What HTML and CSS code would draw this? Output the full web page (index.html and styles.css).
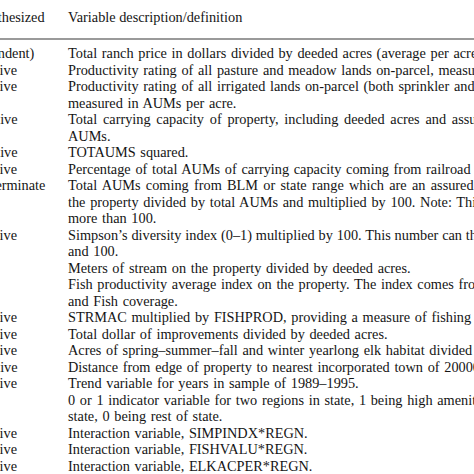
FILE: index.html
```html
<!DOCTYPE html>
<html lang="en">
<head>
<meta charset="utf-8">
<title>Table 1</title>
<link rel="stylesheet" href="styles.css">
</head>
<body>
<table class="vars">
  <thead>
    <tr><th class="sign">Hypothesized</th><th class="desc">Variable description/definition</th></tr>
  </thead>
  <tbody>
    <tr><td class="sign">(dependent)</td><td class="desc">Total ranch price in dollars divided by deeded acres (average per acre)</td></tr>
    <tr><td class="sign pos">Positive</td><td class="desc">Productivity rating of all pasture and meadow lands on-parcel, measured</td></tr>
    <tr><td class="sign pos">Positive</td><td class="desc">Productivity rating of all irrigated lands on-parcel (both sprinkler and<br>measured in AUMs per acre.</td></tr>
    <tr><td class="sign">Negative</td><td class="desc"><span class="wide">Total carrying capacity of property, including deeded acres and assured</span><br>AUMs.</td></tr>
    <tr><td class="sign">Negative</td><td class="desc">TOTAUMS squared.</td></tr>
    <tr><td class="sign pos">Positive</td><td class="desc">Percentage of total AUMs of carrying capacity coming from railroad</td></tr>
    <tr><td class="sign">Indeterminate</td><td class="desc"><span class="loose">Total AUMs coming from BLM or state range which are an assured</span><br>the property divided by total AUMs and multiplied by 100. Note: This<br>more than 100.</td></tr>
    <tr><td class="sign pos">Positive</td><td class="desc"><span class="tight">Simpson’s diversity index (0–1) multiplied by 100. This number can then</span><br>and 100.</td></tr>
    <tr><td class="sign"></td><td class="desc">Meters of stream on the property divided by deeded acres.</td></tr>
    <tr><td class="sign"></td><td class="desc">Fish productivity average index on the property. The index comes from<br>and Fish coverage.</td></tr>
    <tr><td class="sign pos">Positive</td><td class="desc">STRMAC multiplied by FISHPROD, providing a measure of fishing</td></tr>
    <tr><td class="sign pos">Positive</td><td class="desc">Total dollar of improvements divided by deeded acres.</td></tr>
    <tr><td class="sign pos">Positive</td><td class="desc">Acres of spring–summer–fall and winter yearlong elk habitat divided</td></tr>
    <tr><td class="sign">Negative</td><td class="desc">Distance from edge of property to nearest incorporated town of 20000</td></tr>
    <tr><td class="sign pos">Positive</td><td class="desc">Trend variable for years in sample of 1989–1995.</td></tr>
    <tr><td class="sign"></td><td class="desc">0 or 1 indicator variable for two regions in state, 1 being high amenity<br>state, 0 being rest of state.</td></tr>
    <tr><td class="sign pos">Positive</td><td class="desc">Interaction variable, SIMPINDX*REGN.</td></tr>
    <tr><td class="sign pos">Positive</td><td class="desc">Interaction variable, FISHVALU*REGN.</td></tr>
    <tr><td class="sign pos">Positive</td><td class="desc">Interaction variable, ELKACPER*REGN.</td></tr>
  </tbody>
</table>
</body>
</html>
```

FILE: styles.css
```css
html, body {
  margin: 0;
  padding: 0;
  background: #ffffff;
  overflow: hidden;
}
body {
  width: 474px;
  height: 474px;
  font-family: "Liberation Serif", "Times New Roman", serif;
  font-size: 14.3px;
  line-height: 16.48px;
  color: #151515;
}
.vars {
  border-collapse: collapse;
  margin-left: -34px;
  white-space: nowrap;
}
.vars th {
  font-weight: normal;
  text-align: left;
  padding: 9px 0 13px 0;
  border-bottom: 2px solid #9a9a9a;
  vertical-align: top;
}
.vars td {
  padding: 0;
  vertical-align: top;
}
.vars tbody tr:first-child td {
  padding-top: 5px;
}
.sign {
  width: 102px;
  min-width: 102px;
  max-width: 102px;
}
.sign.pos {
  text-indent: 5px;
}
.desc {
  text-align: left;
}
tbody .desc {
  word-spacing: 1.1px;
}
tbody .desc .tight {
  word-spacing: 0.3px;
}
tbody .desc .wide {
  word-spacing: 2.2px;
}
tbody .desc .loose {
  word-spacing: 1.7px;
}
```
